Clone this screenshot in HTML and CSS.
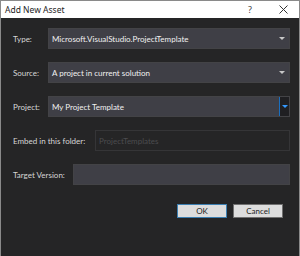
FILE: index.html
```html
<!DOCTYPE html>
<html>
<head>
<meta charset="utf-8">
<link rel="stylesheet" href="styles.css">
</head>
<body>
<div class="window">
  <div class="titlebar">
    <span class="title">Add New Asset</span>
    <span class="help">?</span>
    <span class="close">
      <svg width="9" height="9" viewBox="0 0 9 9"><path d="M0.5 0.5 L8.5 8.5 M8.5 0.5 L0.5 8.5" stroke="#333" stroke-width="1" fill="none"/></svg>
    </span>
  </div>
  <div class="content">
    <div class="row">
      <label class="lbl w35">Type:</label>
      <div class="field combo"><span class="val">Microsoft.VisualStudio.ProjectTemplate</span><span class="arrow"></span></div>
    </div>
    <div class="row">
      <label class="lbl w35">Source:</label>
      <div class="field combo"><span class="val">A project in current solution</span><span class="arrow"></span></div>
    </div>
    <div class="row">
      <label class="lbl w35">Project:</label>
      <div class="field combo active"><span class="val">My Project Template</span><span class="drop"><span class="arrow blue"></span></span></div>
    </div>
    <div class="row">
      <label class="lbl w82">Embed in this folder:</label>
      <div class="field disabled"><span class="val">ProjectTemplates</span></div>
    </div>
    <div class="row">
      <label class="lbl w60">Target Version:</label>
      <div class="field"></div>
    </div>
    <div class="buttons">
      <button class="btn default">OK</button>
      <button class="btn">Cancel</button>
    </div>
  </div>
</div>
</body>
</html>
```
FILE: styles.css
```css
html, body {
  margin: 0;
  padding: 0;
  background: #252526;
}
body {
  width: 300px;
  height: 256px;
  overflow: hidden;
  font-family: "Noto Sans", "Open Sans", sans-serif;
}
.window {
  width: 300px;
  height: 256px;
  box-sizing: border-box;
  border: 1px solid #8a8a8a;
  border-bottom: none;
  background: #252526;
  display: flex;
  flex-direction: column;
}
.titlebar {
  height: 17px;
  background: #ffffff;
  display: flex;
  align-items: center;
  padding-left: 4px;
  color: #1e1e1e;
  font-size: 8.5px;
}
.title {
  flex: 1;
}
.help {
  width: 10px;
  font-size: 9px;
  color: #444;
  margin-right: 21px;
}
.close {
  display: flex;
  margin-right: 11px;
}
.content {
  padding: 10px 9px 0 12px;
  display: flex;
  flex-direction: column;
  gap: 13px;
}
.row {
  display: flex;
  align-items: center;
  height: 21px;
}
.lbl {
  color: #d6d6d6;
  font-family: Lato, "Noto Sans", sans-serif;
  font-size: 8px;
  flex: none;
}
.w35 { width: 35px; }
.w82 { width: 82px; }
.w60 { width: 60px; }
.field {
  flex: 1;
  height: 21px;
  box-sizing: border-box;
  background: #3f3f46;
  border: 1px solid #434346;
  display: flex;
  align-items: center;
  padding-left: 3px;
  color: #f1f1f1;
  font-family: Lato, "Noto Sans", sans-serif;
  font-size: 8px;
}
.val {
  flex: 1;
  white-space: nowrap;
}
.arrow {
  width: 0;
  height: 0;
  border-left: 3px solid transparent;
  border-right: 3px solid transparent;
  border-top: 3px solid #c8c8c8;
  margin-right: 4px;
}
.arrow.blue {
  border-top-color: #3399ff;
  margin: 0;
}
.drop {
  width: 9px;
  height: 19px;
  background: #1f1f22;
  border-left: 1px solid #1a6fbf;
  display: flex;
  align-items: center;
  justify-content: center;
}
.field.disabled {
  background: #252526;
  border-color: #353537;
  color: #4c4c4f;
}
.buttons {
  display: flex;
  justify-content: flex-end;
  gap: 6px;
  margin-top: 6px;
  padding-right: 7px;
}
.btn {
  width: 50px;
  height: 14px;
  box-sizing: border-box;
  background: #dddddd;
  border: 1px solid #707070;
  font-family: Lato, "Noto Sans", sans-serif;
  font-size: 8px;
  color: #1e1e1e;
  padding: 0;
  line-height: 11px;
}
.btn.default {
  border-color: #3c7fb1;
}
```
